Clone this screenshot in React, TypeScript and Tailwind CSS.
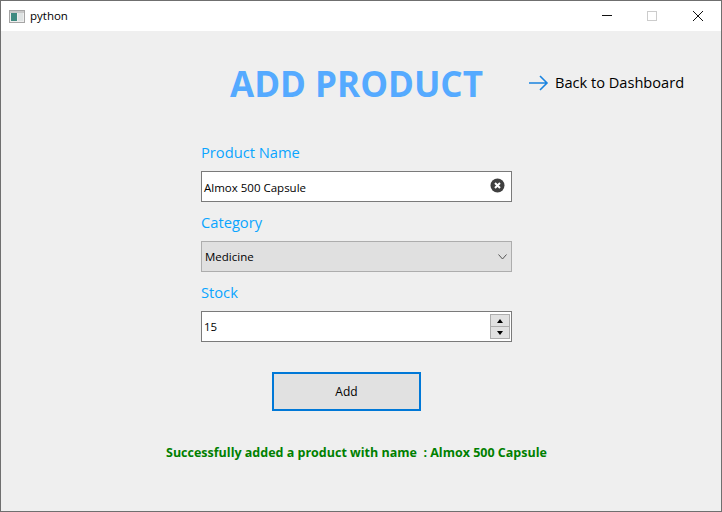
import React from "react";

const font = { fontFamily: '"Open Sans", "Noto Sans", sans-serif' };

function Label({ children }: { children: React.ReactNode }) {
  return <div className="h-[20px] leading-[20px] text-[14.7px] text-[#0aa5ff]">{children}</div>;
}

export default function App() {
  return (
    <div style={font} className="w-[722px] h-[512px] bg-[#efefef] border border-[#6f6f6f] flex flex-col overflow-hidden text-black">
      <div className="h-[30px] bg-white flex items-center shrink-0">
        <svg width="16" height="13" viewBox="0 0 16 13" className="ml-[8px]">
          <rect x="0.5" y="0.5" width="15" height="12" fill="#eeeeee" stroke="#a5a5a5" />
          <rect x="1" y="1" width="14" height="2" fill="#c8c8c8" />
          <rect x="2" y="3" width="6" height="8" fill="#3f8a80" />
          <rect x="9" y="3" width="5" height="8" fill="#dfe3e3" />
        </svg>
        <span className="ml-[5px] text-[11.5px] leading-[16px]">python</span>
        <div className="ml-auto flex items-center">
          <svg width="46" height="30" viewBox="0 0 46 30"><path d="M19 14.5h10" stroke="#111" strokeWidth="1" /></svg>
          <svg width="46" height="30" viewBox="0 0 46 30"><rect x="18.5" y="10.5" width="9" height="9" fill="none" stroke="#cccccc" /></svg>
          <svg width="46" height="30" viewBox="0 0 46 30"><path d="M18 10l10 10M28 10l-10 10" stroke="#111" strokeWidth="1" /></svg>
        </div>
      </div>

      <div className="flex items-center h-[44px] mt-[31px] shrink-0">
        <div className="ml-[229px] w-[252px] text-[35px] leading-[44px] font-bold text-[#55aaff] whitespace-nowrap">ADD PRODUCT</div>
        <svg width="20" height="16" viewBox="0 0 20 16" className="ml-[47px] -translate-y-[1px]">
          <path d="M0 8h18M11 1l7 7-7 7" fill="none" stroke="#1a84e0" strokeWidth="1.6" />
        </svg>
        <span className="ml-[6px] text-[14.6px] leading-[20px] whitespace-nowrap -translate-y-[2px]">Back to Dashboard</span>
      </div>

      <div className="ml-[200px] w-[311px] flex flex-col mt-[36px] shrink-0">
        <Label>Product Name</Label>
        <div className="mt-[9px] h-[31px] bg-white border border-[#7a7a7a] flex items-center pl-[2px] pr-[6px]">
          <span className="text-[11.5px] translate-y-[1px]">Almox 500 Capsule</span>
          <svg width="15" height="15" viewBox="0 0 15 15" className="ml-auto -translate-y-[1px]">
            <circle cx="7.5" cy="7.5" r="7" fill="#404040" />
            <path d="M5 5l5 5M10 5l-5 5" stroke="#fff" strokeWidth="2" />
          </svg>
        </div>

        <div className="mt-[10px]"><Label>Category</Label></div>
        <div className="mt-[9px] h-[31px] bg-[#e0e0e0] border border-[#adadad] flex items-center pl-[3px] pr-[3px]">
          <span className="text-[11.5px]">Medicine</span>
          <svg width="9" height="6" viewBox="0 0 9 6" className="ml-auto mr-[1px]">
            <path d="M0.5 0.5l4 4.5 4-4.5" fill="none" stroke="#555" strokeWidth="1" />
          </svg>
        </div>

        <div className="mt-[10px]"><Label>Stock</Label></div>
        <div className="mt-[9px] h-[31px] bg-white border border-[#7a7a7a] flex items-center pl-[2px] pr-[1px]">
          <span className="text-[11.5px]">15</span>
          <div className="ml-auto flex flex-col">
            <div className="w-[20px] h-[13px] bg-[#e1e1e1] border border-[#adadad] flex items-center justify-center">
              <svg width="6" height="4" viewBox="0 0 6 4"><path d="M3 0l3 4H0z" fill="#000" /></svg>
            </div>
            <div className="w-[20px] h-[13px] -mt-[1px] bg-[#e1e1e1] border border-[#adadad] flex items-center justify-center">
              <svg width="6" height="4" viewBox="0 0 6 4"><path d="M0 0h6L3 4z" fill="#000" /></svg>
            </div>
          </div>
        </div>
      </div>

      <div className="ml-[271px] mt-[30px] w-[149px] h-[39px] bg-[#e1e1e1] border-2 border-[#0078d7] flex items-center justify-center text-[12px] shrink-0">
        Add
      </div>

      <div className="ml-[165px] mt-[33px] text-[12.5px] leading-[18px] font-bold text-[#008000] whitespace-pre shrink-0">
        Successfully added a product with name  : Almox 500 Capsule
      </div>
    </div>
  );
}
